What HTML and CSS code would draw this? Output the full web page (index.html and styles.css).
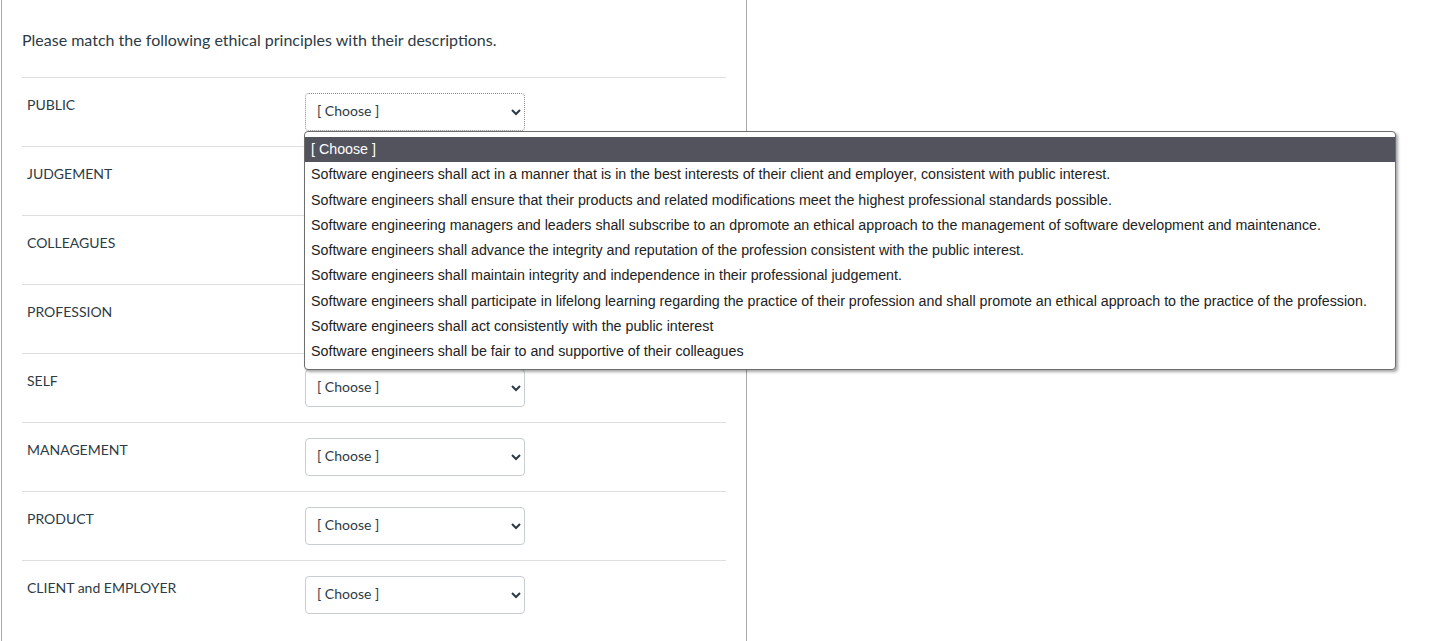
FILE: index.html
```html
<!DOCTYPE html>
<html lang="en">
<head>
  <meta charset="UTF-8">
  <meta name="viewport" content="width=device-width, initial-scale=1.0">
  <title>Matching Question</title>
  <link rel="stylesheet" href="styles.css">
</head>
<body>
  <div class="panel">
    <p class="question-text">Please match the following ethical principles with their descriptions.</p>

    <div class="answers">
      <div class="answer-row">
        <div class="answer-label">PUBLIC</div>
        <select class="answer-select is-open"><option>[ Choose ]</option></select>
      </div>
      <div class="answer-row">
        <div class="answer-label">JUDGEMENT</div>
        <select class="answer-select"><option>[ Choose ]</option></select>
      </div>
      <div class="answer-row">
        <div class="answer-label">COLLEAGUES</div>
        <select class="answer-select"><option>[ Choose ]</option></select>
      </div>
      <div class="answer-row">
        <div class="answer-label">PROFESSION</div>
        <select class="answer-select"><option>[ Choose ]</option></select>
      </div>
      <div class="answer-row">
        <div class="answer-label">SELF</div>
        <select class="answer-select"><option>[ Choose ]</option></select>
      </div>
      <div class="answer-row">
        <div class="answer-label">MANAGEMENT</div>
        <select class="answer-select"><option>[ Choose ]</option></select>
      </div>
      <div class="answer-row">
        <div class="answer-label">PRODUCT</div>
        <select class="answer-select"><option>[ Choose ]</option></select>
      </div>
      <div class="answer-row">
        <div class="answer-label">CLIENT and EMPLOYER</div>
        <select class="answer-select"><option>[ Choose ]</option></select>
      </div>
    </div>
  </div>

  <!-- open option list of the first select -->
  <ul class="option-list">
    <li class="option selected">[ Choose ]</li>
    <li class="option">Software engineers shall act in a manner that is in the best interests of their client and employer, consistent with public interest.</li>
    <li class="option">Software engineers shall ensure that their products and related modifications meet the highest professional standards possible.</li>
    <li class="option">Software engineering managers and leaders shall subscribe to an dpromote an ethical approach to the management of software development and maintenance.</li>
    <li class="option">Software engineers shall advance the integrity and reputation of the profession consistent with the public interest.</li>
    <li class="option">Software engineers shall maintain integrity and independence in their professional judgement.</li>
    <li class="option">Software engineers shall participate in lifelong learning regarding the practice of their profession and shall promote an ethical approach to the practice of the profession.</li>
    <li class="option">Software engineers shall act consistently with the public interest</li>
    <li class="option">Software engineers shall be fair to and supportive of their colleagues</li>
  </ul>
</body>
</html>
```

FILE: styles.css
```css
:root {
  --text-color: #2d3b45;
  --rule-color: #dcdee0;
  --panel-border: #a9a9a9;
  --select-border: #c7cdd1;
  --highlight: #53535e;
}

body {
  margin: 0;
  font-family: Lato, "Open Sans", sans-serif;
  color: var(--text-color);
  background-color: #fff;
}

.panel {
  width: 746px;
  min-height: 641px;
  margin-left: 1px;
  padding: 28px 20px 0 20px;
  box-sizing: border-box;
  border-left: 1px solid var(--panel-border);
  border-right: 1px solid var(--panel-border);
}

.question-text {
  margin: 0 0 25px 0;
  font-size: 16px;
  line-height: 24px;
}

.answer-row {
  display: flex;
  align-items: flex-start;
  padding: 15px 0 15px 5px;
  border-top: 1px solid var(--rule-color);
}

.answer-label {
  width: 278px;
  margin-top: 2px;
  font-size: 14px;
  line-height: 20px;
}

.answer-select {
  width: 220px;
  height: 38px;
  padding: 0 6px 3px 7px;
  font-family: Lato, "Open Sans", sans-serif;
  font-size: 14px;
  color: var(--text-color);
  background-color: #fff;
  border: 1px solid var(--select-border);
  border-radius: 4px;
}

.answer-select.is-open {
  border: 1px dotted #8a8a8a;
}

/* Option popup */
.option-list {
  position: absolute;
  left: 304px;
  top: 131px;
  width: 1092px;
  margin: 0;
  padding: 5px 0;
  box-sizing: border-box;
  list-style: none;
  background-color: #fff;
  border: 1px solid #6d6d6d;
  border-radius: 4px;
  box-shadow: 2px 2px 3px rgba(0, 0, 0, 0.35);
  font-family: "Liberation Sans", Arial, sans-serif;
  font-size: 14.25px;
  color: #222;
}

.option {
  height: 25.25px;
  line-height: 25px;
  padding-left: 6px;
  white-space: nowrap;
}

.option.selected {
  background-color: var(--highlight);
  color: #fff;
}
```
